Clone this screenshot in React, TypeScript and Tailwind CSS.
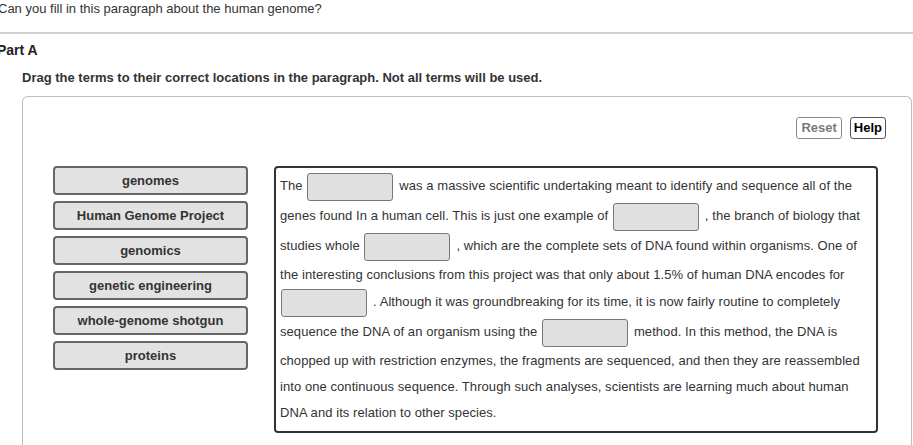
const terms = [
  'genomes',
  'Human Genome Project',
  'genomics',
  'genetic engineering',
  'whole-genome shotgun',
  'proteins',
];

function Blank() {
  return (
    <span className="my-[1px] ml-[1px] mr-[6px] inline-block h-[28px] w-[86px] rounded-[3px] border border-[#777] bg-[#e0e0e0] align-middle" />
  );
}

export default function App() {
  return (
    <div className="min-h-[445px] w-[913px] overflow-hidden bg-white font-['Liberation_Sans',Arial,sans-serif] text-[#333]">
      <div className="ml-[-2px] h-[18px] text-[13px] leading-[18px]">
        Can you fill in this paragraph about the human genome?
      </div>
      <div className="mt-[14px] h-[2px] bg-[#cfcfcf]" />
      <div className="ml-[-3px] mt-[7px] text-[14px] font-bold leading-[18px] text-[#222]">
        Part A
      </div>
      <div className="ml-[22px] mt-[10px] text-[13px] font-bold leading-[18px] text-[#333]">
        Drag the terms to their correct locations in the paragraph. Not all terms will be used.
      </div>
      <div className="ml-[22px] mt-[9px] w-[890px] rounded-t-[6px] border border-b-0 border-[#bdbdbd] pb-[20px] pl-[30px] pr-[25px] pt-[20px]">
        <div className="flex justify-end gap-[8px]">
          <button className="h-[22px] rounded-[3px] border border-[#8a8a8a] bg-white px-[4px] text-[13px] font-bold leading-[18px] text-[#7a7a7a]">
            Reset
          </button>
          <button className="h-[22px] rounded-[3px] border border-[#555] bg-white px-[3px] text-[13px] font-bold leading-[18px] text-black">
            Help
          </button>
        </div>
        <div className="mt-[27px] flex gap-[26px]">
          <div className="flex w-[195px] shrink-0 flex-col gap-[6px]">
            {terms.map((t) => (
              <div
                key={t}
                className="flex h-[29px] items-center justify-center rounded-[4px] border-2 border-[#666] bg-[#e2e2e2] pt-[1px] text-[13px] font-bold text-[#333]"
              >
                {t}
              </div>
            ))}
          </div>
          <div className="w-[604px] rounded-[4px] border-2 border-[#333] pb-[5px] pl-[4px] pr-[8px] pt-[4px] text-[13px] leading-[26px] tracking-[0.07px] text-[#333]">
            The <Blank />was a massive scientific undertaking meant to identify and sequence all of the genes found In a human cell. This is just one example of <Blank />, the branch of biology that studies whole <Blank />, which are the complete sets of DNA found within organisms. One of the interesting conclusions from this project was that only about 1.5% of human DNA encodes for <Blank />. Although it was groundbreaking for its time, it is now fairly routine to completely sequence the DNA of an organism using the <Blank />method. In this method, the DNA is chopped up with restriction enzymes, the fragments are sequenced, and then they are reassembled into one continuous sequence. Through such analyses, scientists are learning much about human DNA and its relation to other species.
          </div>
        </div>
      </div>
    </div>
  );
}
